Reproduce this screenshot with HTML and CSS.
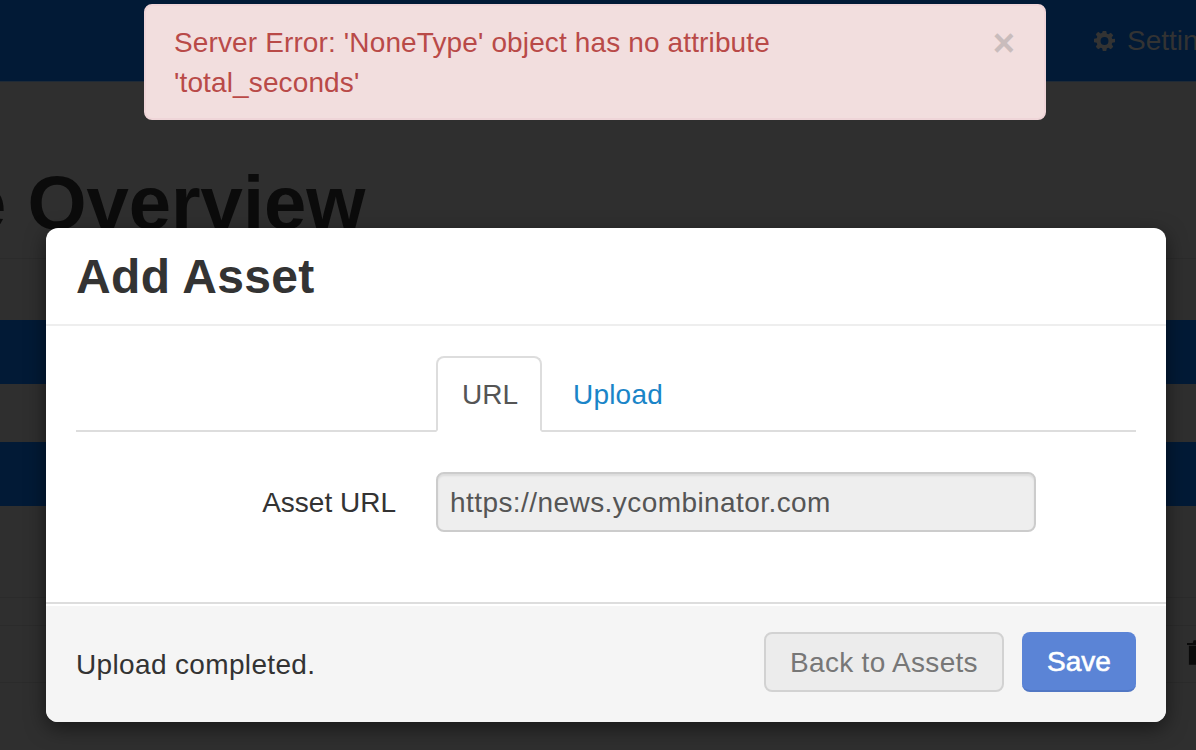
FILE: index.html
```html
<!DOCTYPE html>
<html lang="en">
<head>
    <meta charset="UTF-8">
    <meta name="viewport" content="width=device-width, initial-scale=1.0">
    <title>Add Asset</title>
    <link rel="stylesheet" href="styles.css">
</head>
<body>

    <!-- Page behind the backdrop -->
    <div class="page">
        <div class="navbar">
            <svg class="gear" viewBox="0 0 24 24" aria-hidden="true">
                <path d="M10 1h4l.7 3.2 1.7.7 2.8-1.8 2.8 2.8-1.8 2.8.7 1.7L24 10v4l-3.100.7-.7 1.700 1.800 2.800-2.800 2.800-2.800-1.800-1.700.7L14 24h-4l-.7-3.100-1.700-.7-2.800 1.800-2.800-2.800 1.800-2.800-.7-1.700L0 14v-4l3.100-.7.7-1.700L2 4.900l2.800-2.800 2.800 1.800 1.700-.7zM12 8a4.500 4.500 0 1 0 0 9 4.500 4.500 0 0 0 0-9z" fill-rule="evenodd"/>
            </svg>
            <span class="nav-link">Settings</span>
        </div>
        <h1 class="page-title">e Overview</h1>
        <div class="row"></div>
        <div class="row row-blue"></div>
        <div class="row row-plain"></div>
        <div class="row row-blue"></div>
        <div class="row row-last">
            <div class="trash-row">
                <svg class="trash" viewBox="0 0 20 26" aria-hidden="true">
                    <path d="M7 0h6l1 3h6v2H0V3h6zM2 6h16v20H2z"/>
                </svg>
            </div>
        </div>
    </div>

    <!-- Error alert -->
    <div class="alert">
        <p class="alert-text">Server Error: 'NoneType' object has no attribute 'total_seconds'</p>
        <span class="alert-close">&times;</span>
    </div>

    <!-- Add asset modal -->
    <div class="modal">
        <div class="modal-header">
            <h3>Add Asset</h3>
        </div>
        <div class="modal-body">
            <ul class="tabs">
                <li class="tab active">URL</li>
                <li class="tab"><a href="#">Upload</a></li>
            </ul>
            <div class="form-row">
                <label for="assetUrl">Asset URL</label>
                <input type="text" id="assetUrl" value="https://news.ycombinator.com" disabled>
            </div>
        </div>
        <div class="modal-footer">
            <span class="status">Upload completed.</span>
            <div class="actions">
                <button class="btn btn-back">Back to Assets</button>
                <button class="btn btn-save">Save</button>
            </div>
        </div>
    </div>

</body>
</html>
```

FILE: styles.css
```css
/* CSS */
html, body {
    height: 100%;
}

body {
    font-family: "Liberation Sans", Arial, sans-serif;
    font-size: 28px;
    line-height: 40px;
    background-color: #2f2f2f;
    color: #333;
    margin: 0;
    position: relative;
    overflow: hidden;
}

.page {
    height: 750px;
    overflow: hidden;
}

.navbar {
    height: 81px;
    background-color: #021a36;
    border-bottom: 1px solid #1f2a36;
    display: flex;
    align-items: center;
    padding-left: 1094px;
    white-space: nowrap;
    color: #333;
}

.gear {
    width: 21px;
    height: 21px;
    fill: #333;
    margin-right: 12px;
    flex: none;
}

.page-title {
    font-size: 76px;
    line-height: 80px;
    font-weight: bold;
    color: #0b0b0b;
    margin: 81px 0 0 -36px;
    white-space: nowrap;
    height: 95px;
}

.row {
    height: 61px;
    border-top: 1px solid #2b2b2b;
}

.row-blue {
    height: 64px;
    background-color: #021a36;
    border-top: 0;
}

.row-plain {
    height: 58px;
    border-top: 0;
}

.row-last {
    height: 153px;
    margin-top: 91px;
    padding-top: 27px;
}

.trash-row {
    height: 58px;
    box-sizing: border-box;
    border-top: 1px solid #2b2b2b;
    border-bottom: 1px solid #2b2b2b;
    padding: 14px 0 0 1187px;
    display: flex;
}

.trash {
    width: 19px;
    height: 25px;
    fill: #0b0b0b;
    flex: none;
}

.alert {
    position: absolute;
    top: 4px;
    left: 144px;
    width: 902px;
    height: 116px;
    box-sizing: border-box;
    background-color: #f2dede;
    border: 2px solid #efd5d8;
    border-radius: 8px;
    color: #b94a48;
    padding: 17px 28px 0;
    letter-spacing: 0.13px;
}

.alert-text {
    margin: 0;
    width: 680px;
}

.alert-close {
    position: absolute;
    top: 17px;
    right: 29px;
    font-size: 38px;
    font-weight: bold;
    line-height: 40px;
    color: #c9bcbc;
}

.modal {
    position: absolute;
    top: 228px;
    left: 46px;
    width: 1120px;
    height: 494px;
    background-color: white;
    border-radius: 12px;
    box-shadow: 0 6px 20px rgba(0, 0, 0, 0.5);
    display: flex;
    flex-direction: column;
    overflow: hidden;
}

.modal-header {
    height: 96px;
    border-bottom: 2px solid #eee;
    padding: 0 30px;
    flex: none;
}

.modal-header h3 {
    font-size: 48px;
    line-height: 98px;
    font-weight: bold;
    margin: 0;
    color: #333;
    letter-spacing: 0.33px;
}

.modal-body {
    flex: 1;
    padding: 30px 30px 0;
}

.tabs {
    list-style: none;
    margin: 0;
    padding: 0 0 0 360px;
    display: flex;
    height: 76px;
    box-sizing: border-box;
    border-bottom: 2px solid #ddd;
}

.tab {
    height: 76px;
    padding: 2px 26px 0;
    margin-right: 5px;
    line-height: 74px;
    box-sizing: border-box;
}

.tab a {
    color: #1a85c8;
    text-decoration: none;
    letter-spacing: 0.2px;
}

.tab.active {
    color: #555;
    background-color: white;
    border: 2px solid #ddd;
    border-bottom-color: white;
    border-radius: 8px 8px 0 0;
    padding: 0 24px;
    width: 106px;
}

.form-row {
    display: flex;
    align-items: center;
    margin-top: 40px;
}

.form-row label {
    width: 320px;
    text-align: right;
    margin-right: 40px;
    padding-top: 2px;
    flex: none;
    color: #333;
}

.form-row input {
    width: 600px;
    height: 60px;
    box-sizing: border-box;
    font-family: inherit;
    font-size: 28px;
    letter-spacing: 0.43px;
    color: #555;
    background-color: #eee;
    border: 2px solid #ccc;
    border-radius: 8px;
    padding: 2px 12px 0;
    box-shadow: inset 0 2px 2px rgba(0, 0, 0, 0.075);
    opacity: 1;
    -webkit-text-fill-color: #555;
}

.modal-footer {
    flex: none;
    height: 120px;
    box-sizing: border-box;
    background-color: #f5f5f5;
    border-top: 2px solid #ddd;
    box-shadow: inset 0 2px 0 white;
    padding: 0 30px 2px;
    display: flex;
    justify-content: space-between;
    align-items: center;
}

.status {
    margin-top: 6px;
    letter-spacing: 0.35px;
}

.actions {
    display: flex;
    gap: 18px;
}

.btn {
    height: 60px;
    font-family: inherit;
    font-size: 28px;
    line-height: 40px;
    border-radius: 8px;
    padding: 2px 0 0;
    box-sizing: border-box;
}

.btn-back {
    width: 240px;
    color: #777;
    background-color: #ececec;
    border: 2px solid #d2d2d2;
    letter-spacing: 0.3px;
}

.btn-save {
    width: 114px;
    color: white;
    background-color: #5b84d6;
    border: 0;
    border-bottom: 2px solid #5177c4;
    -webkit-text-stroke: 0.6px white;
}
```
